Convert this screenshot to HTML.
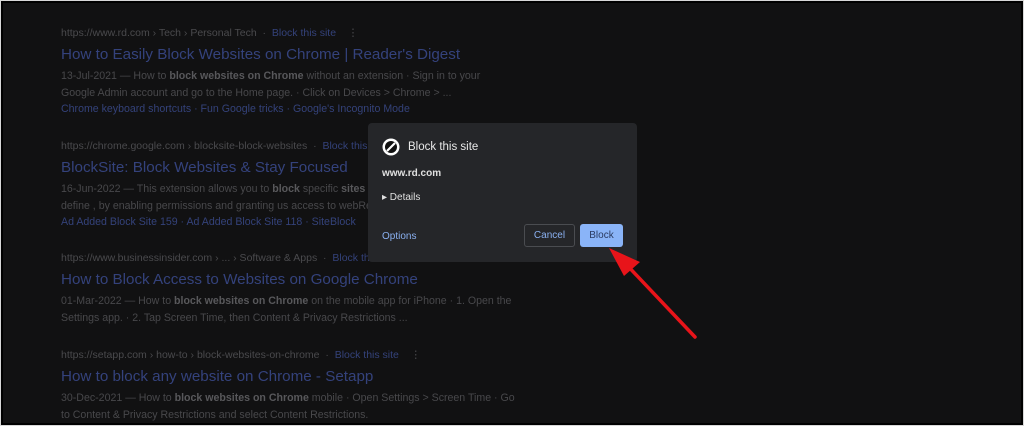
<!DOCTYPE html>
<html><head><style>
html,body{margin:0;padding:0;}
body{width:1024px;height:426px;background:#d8d8d8;position:relative;overflow:hidden;font-family:"Liberation Sans",Arial,sans-serif;}
.frame{position:absolute;left:1px;top:1px;width:1018px;height:420px;border:2px solid #000;background:#111112;}
.r{position:absolute;left:61px;}
.u{font-size:10.5px;color:#4a4a4d;line-height:14px;white-space:nowrap;}
.u .b{color:#34427a;}
.t{font-size:15.2px;color:#34427c;line-height:20px;white-space:nowrap;margin-top:5px;}
.s{font-size:10.6px;color:#48484b;line-height:16.5px;white-space:nowrap;}
.s b{color:#58585b;}
.l{font-size:10.6px;color:#34427a;line-height:16px;white-space:nowrap;}
.dlg{position:absolute;left:368px;top:123px;width:269px;height:139px;background:#252629;border-radius:4px;}
.dlg .h{position:absolute;left:14px;top:15px;font-size:11.5px;color:#e8e8e8;display:flex;align-items:center;}
.dlg .h svg{margin-right:8px;}
.btn{position:absolute;top:101px;height:23px;border-radius:3px;font-size:10px;line-height:23px;text-align:center;}
</style></head><body>
<div class="frame"></div>

<div class="r" style="top:26px">
<div class="u">https://www.rd.com › Tech › Personal Tech &nbsp;· &nbsp;<span class="b">Block this site</span> &nbsp; &nbsp;⋮</div>
<div class="t">How to Easily Block Websites on Chrome | Reader's Digest</div>
<div class="s" style="margin-top:3px">13-Jul-2021 — How to <b>block websites on Chrome</b> without an extension · Sign in to your</div>
<div class="s">Google Admin account and go to the Home page. · Click on Devices &gt; Chrome &gt; ...</div>
<div class="l">Chrome keyboard shortcuts · Fun Google tricks · Google's Incognito Mode</div>
</div>

<div class="r" style="top:139px">
<div class="u">https://chrome.google.com › blocksite-block-websites &nbsp;· &nbsp;<span class="b">Block this site</span></div>
<div class="t">BlockSite: Block Websites &amp; Stay Focused</div>
<div class="s" style="margin-top:3px">16-Jun-2022 — This extension allows you to <b>block</b> specific <b>sites</b> ...</div>
<div class="s">define , by enabling permissions and granting us access to webRequest</div>
<div class="l">Ad Added Block Site 159 · Ad Added Block Site 118 · SiteBlock</div>
</div>

<div class="r" style="top:251px">
<div class="u">https://www.businessinsider.com › ... › Software &amp; Apps &nbsp;· &nbsp;<span class="b">Block this site</span></div>
<div class="t">How to Block Access to Websites on Google Chrome</div>
<div class="s" style="margin-top:3px">01-Mar-2022 — How to <b>block websites on Chrome</b> on the mobile app for iPhone · 1. Open the</div>
<div class="s">Settings app. · 2. Tap Screen Time, then Content &amp; Privacy Restrictions ...</div>
</div>

<div class="r" style="top:348px">
<div class="u">https://setapp.com › how-to › block-websites-on-chrome &nbsp;· &nbsp;<span class="b">Block this site</span> &nbsp; &nbsp;⋮</div>
<div class="t">How to block any website on Chrome - Setapp</div>
<div class="s" style="margin-top:3px">30-Dec-2021 — How to <b>block websites on Chrome</b> mobile · Open Settings &gt; Screen Time · Go</div>
<div class="s">to Content &amp; Privacy Restrictions and select Content Restrictions.</div>
</div>

<div class="dlg">
<div class="h"><svg width="18" height="18" viewBox="0 0 18 18"><circle cx="9" cy="9" r="8.5" fill="#fff"/><circle cx="9" cy="9" r="6" fill="#111"/><line x1="5" y1="13" x2="13" y2="5" stroke="#fff" stroke-width="2.2"/></svg>Block this site</div>
<div style="position:absolute;left:14px;top:45px;font-size:10px;color:#e0e0e0;font-weight:bold;">www.rd.com</div>
<div style="position:absolute;left:14px;top:69px;font-size:10px;color:#e0e0e0;">▸ Details</div>
<div style="position:absolute;left:14px;top:108px;font-size:10px;color:#8ab0f0;">Options</div>
<div class="btn" style="left:156px;width:49px;border:1px solid #4a4c50;color:#8ab0f0;height:21px;line-height:21px;">Cancel</div>
<div class="btn" style="left:212px;width:43px;background:#8ab4f8;color:#2a3a60;">Block</div>
</div>

<svg style="position:absolute;left:0;top:0" width="1024" height="426">
<line x1="695" y1="337" x2="624" y2="262" stroke="#e8141a" stroke-width="3.5" stroke-linecap="round"/>
<polygon points="609,248 640,262 624,276" fill="#e8141a"/>
</svg>
</body></html>
